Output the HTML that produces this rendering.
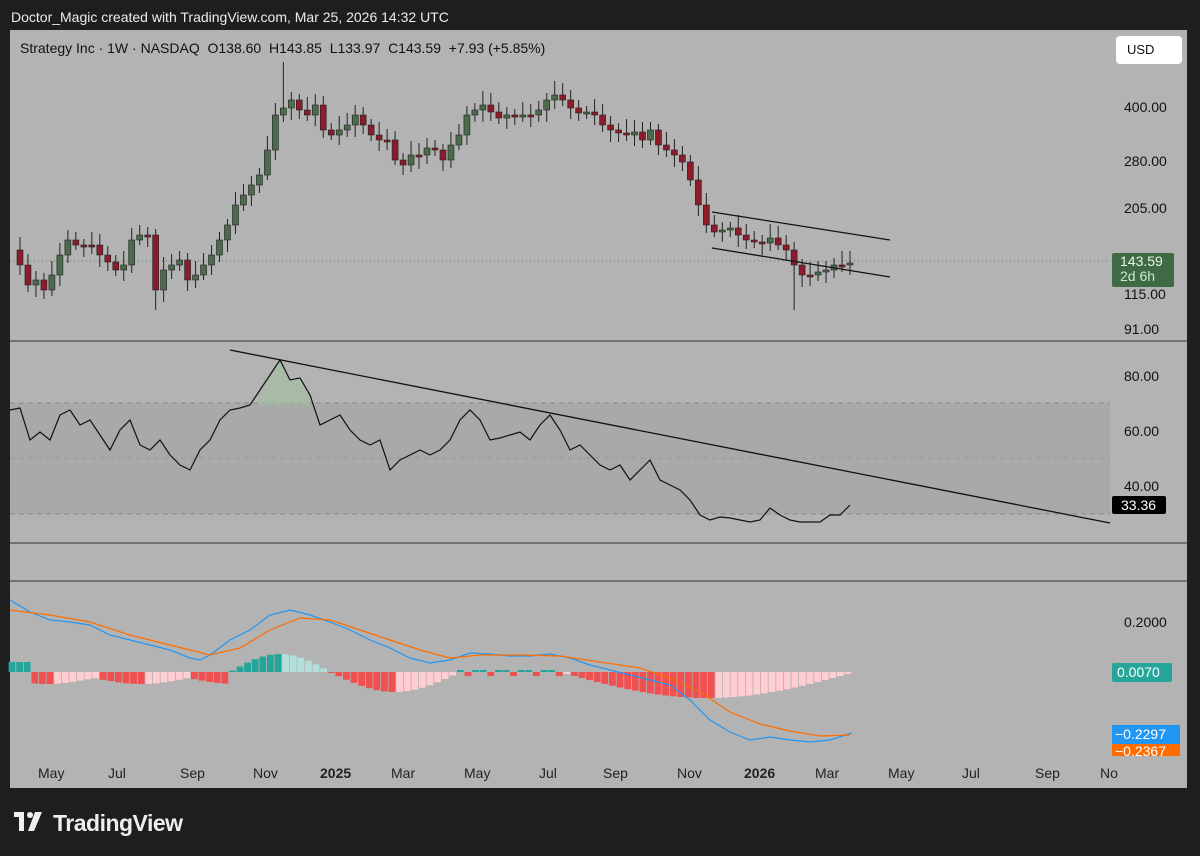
<!DOCTYPE html>
<html><head><meta charset="utf-8"><style>
body{margin:0;width:1200px;height:856px;background:#1e1e1e;font-family:"Liberation Sans",sans-serif;overflow:hidden;position:relative}
.t{position:absolute;color:#ececec}
</style></head><body>
<div class="t" style="left:11px;top:9px;font-size:14px">Doctor_Magic created with TradingView.com, Mar 25, 2026 14:32 UTC</div>
<svg id="s" width="1200" height="856" style="position:absolute;left:0;top:0" font-family="Liberation Sans, sans-serif">
<rect x="10" y="30" width="1178" height="758" fill="#b3b3b3"/>
<rect x="10" y="403" width="1100" height="111" fill="#a9a9a9"/>
<line x1="10" y1="403" x2="1110" y2="403" stroke="#888" stroke-dasharray="5,4"/>
<line x1="10" y1="458" x2="1110" y2="458" stroke="#999" stroke-dasharray="5,4"/>
<line x1="10" y1="514" x2="1110" y2="514" stroke="#888" stroke-dasharray="5,4"/>
<line x1="10" y1="341" x2="1188" y2="341" stroke="#333"/>
<line x1="10" y1="543" x2="1188" y2="543" stroke="#333"/>
<line x1="10" y1="581" x2="1188" y2="581" stroke="#333"/>
<line x1="10" y1="261" x2="1110" y2="261" stroke="#5a7a5a" stroke-dasharray="1,3"/>
<g id="c"></g>
<line x1="712" y1="212" x2="890" y2="240" stroke="#111" stroke-width="1.3"/>
<line x1="712" y1="248" x2="890" y2="277" stroke="#111" stroke-width="1.3"/>
<path d="M258,405 L270,375 L280,360 L290,380 L300,378 L310,395 L310,405 Z" fill="#9fbf9f" opacity=".6"/>
<polyline id="rsi" fill="none" stroke="#111" stroke-width="1.2"/>
<line x1="230" y1="350" x2="1110" y2="523" stroke="#111" stroke-width="1.3"/>
<g id="h"></g>
<polyline id="bl" fill="none" stroke="#2196f3" stroke-width="1.2"/>
<polyline id="ol" fill="none" stroke="#ff6d00" stroke-width="1.2"/>
<g font-size="14" fill="#111">
<text x="1124" y="112">400.00</text><text x="1124" y="166">280.00</text><text x="1124" y="213">205.00</text>
<text x="1124" y="299">115.00</text><text x="1124" y="334">91.00</text>
<text x="1124" y="381">80.00</text><text x="1124" y="436">60.00</text><text x="1124" y="491">40.00</text>
<text x="1124" y="627">0.2000</text>
</g>
<rect x="1112" y="253" width="62" height="34" rx="2" fill="#3e6b46"/>
<text x="1120" y="266" font-size="14" fill="#e8f5e8">143.59</text>
<text x="1120" y="281" font-size="14" fill="#cfe6cf">2d 6h</text>
<rect x="1112" y="496" width="54" height="18" rx="2" fill="#000"/>
<text x="1121" y="510" font-size="14" fill="#fff">33.36</text>
<rect x="1112" y="663" width="60" height="19" rx="2" fill="#26a69a"/>
<text x="1117" y="677" font-size="14" fill="#fff">0.0070</text>
<rect x="1112" y="725" width="68" height="19" fill="#2196f3"/>
<text x="1115" y="739" font-size="14" fill="#fff">−0.2297</text>
<rect x="1112" y="744" width="68" height="12" fill="#ff6d00"/>
<text x="1115" y="756" font-size="14" fill="#fff">−0.2367</text>
<rect x="1116" y="36" width="66" height="28" rx="4" fill="#fff"/>
<text x="1127" y="54" font-size="13" fill="#111">USD</text>
<text x="20" y="53" font-size="14" fill="#111" xml:space="preserve" style="white-space:pre">Strategy Inc · 1W · NASDAQ  O138.60  H143.85  L133.97  C143.59  +7.93 (+5.85%)</text>
<g font-size="14" fill="#222">
<text x="38" y="778">May</text><text x="108" y="778">Jul</text><text x="180" y="778">Sep</text><text x="253" y="778">Nov</text>
<text x="320" y="778" font-weight="bold">2025</text><text x="391" y="778">Mar</text><text x="464" y="778">May</text><text x="539" y="778">Jul</text>
<text x="603" y="778">Sep</text><text x="677" y="778">Nov</text><text x="744" y="778" font-weight="bold">2026</text><text x="815" y="778">Mar</text>
<text x="888" y="778">May</text><text x="962" y="778">Jul</text><text x="1035" y="778">Sep</text><text x="1100" y="778">No</text>
</g>
<line x1="1188" y1="30" x2="1188" y2="788" stroke="#1e1e1e" stroke-width="2"/>
<g fill="#eee"><rect x="14" y="812" width="10" height="5"/><rect x="19" y="812" width="5" height="19"/><circle cx="30" cy="815" r="3"/><path d="M35 812 L42 812 L34 831 L28 831 Z"/></g>
<text x="53" y="831" font-size="23" fill="#eee" font-weight="bold" letter-spacing="-0.5">TradingView</text>
</svg>
<script>
var ys=[250,265,285,280,290,275,255,240,245,245,245,255,262,270,265,240,235,235,290,270,265,260,280,275,265,255,240,225,205,195,185,175,150,115,108,100,110,115,105,130,135,130,125,115,125,135,140,140,160,165,155,155,148,150,160,145,135,115,110,105,112,118,115,117,115,115,110,100,95,100,108,113,112,115,125,130,133,135,132,140,130,145,150,155,162,180,205,225,232,230,228,235,240,242,243,238,245,250,265,275,275,272,270,265,265,263];
var N=ys.length,st=(850-12)/(N-1),g="";
for(var i=1;i<N;i++){var x=12+i*st,o=ys[i-1],c=ys[i];var up=c<o;var t=Math.min(o,c),b=Math.max(o,c);if(b-t<2)b=t+2;
var w1=t-6-(i*7%9),w2=b+5+(i*5%8);if(i==34)w1=62;if(i==98)w2=310;if(i==18)w2=310;
var col=up?"#4b6b4b":"#8a1c2c";g+='<line x1="'+x+'" y1="'+w1+'" x2="'+x+'" y2="'+w2+'" stroke="#222"/><rect x="'+(x-3)+'" y="'+t+'" width="6" height="'+(b-t)+'" fill="'+col+'" stroke="#222" stroke-width=".6"/>';}
document.getElementById("c").innerHTML=g;
document.getElementById("rsi").setAttribute("points","10,410 20,408 30,440 40,432 50,440 60,415 70,410 80,425 90,420 100,435 110,450 120,430 130,420 140,445 150,450 160,440 170,455 180,465 190,470 200,450 210,440 220,420 230,410 240,408 250,405 260,390 270,375 280,360 290,380 300,378 310,395 320,425 330,420 340,415 350,430 360,440 370,445 380,440 390,470 400,460 410,455 420,450 430,455 440,450 450,440 460,420 470,410 480,420 490,440 500,438 510,435 520,432 530,440 540,425 550,415 560,430 570,450 580,445 590,455 600,465 610,470 620,465 630,480 640,470 650,460 660,480 670,485 680,490 690,500 700,515 710,520 720,517 730,518 740,520 750,522 760,520 770,508 780,515 790,520 800,522 810,522 820,522 830,515 840,515 850,505");
document.getElementById("bl").setAttribute("points","10,600 30,612 50,620 70,622 90,625 110,635 130,640 150,645 170,650 190,658 200,660 210,655 230,640 250,630 270,615 290,610 310,615 330,622 350,630 370,640 390,648 410,658 430,663 450,660 470,653 490,654 510,656 530,656 550,654 570,658 590,665 610,670 630,675 650,680 670,685 690,700 710,720 730,732 750,740 770,737 790,740 810,742 830,740 852,733");
document.getElementById("ol").setAttribute("points","10,610 50,615 90,622 130,635 170,645 210,655 240,648 270,630 300,618 330,620 360,630 390,640 420,650 450,658 480,655 520,655 560,656 600,662 640,668 670,678 700,692 730,712 760,724 790,731 820,736 850,735");
var hv=[];for(var i=0;i<112;i++){var x=12+i*7.6,v;
if(x<28)v=10;else if(x<230)v=-6-6*Math.abs(Math.sin(x/30));else if(x<330)v=18*Math.sin((x-230)/100*Math.PI);else if(x<460)v=-20*Math.sin((x-330)/130*Math.PI);else if(x<560)v=(i%3?1:-2)*2;else if(x<855)v=-26*Math.sin((x-560)/295*Math.PI);else break;hv.push([x,v]);}
g="";for(var i=0;i<hv.length;i++){var x=hv[i][0],v=hv[i][1],p=i?hv[i-1][1]:v;var col=v>=0?(v>=p?"#26a69a":"#b2dfdb"):(v<=p?"#f05050":"#ffcdd2");
g+='<rect x="'+(x-3.4)+'" y="'+(v>=0?672-v:672)+'" width="6.8" height="'+Math.max(1,Math.abs(v))+'" fill="'+col+'"/>';}
document.getElementById("h").innerHTML=g;
</script>
</body></html>
